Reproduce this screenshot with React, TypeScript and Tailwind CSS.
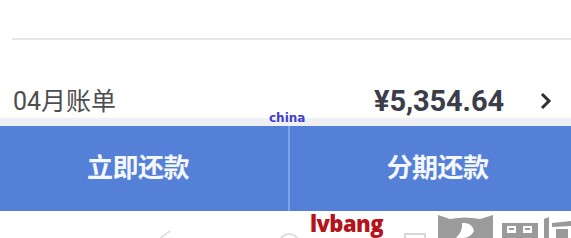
export default function App() {
  return (
    <div className="relative w-[571px] h-[238px] overflow-hidden bg-white" style={{ fontFamily: 'Roboto, "Noto Sans CJK SC", sans-serif' }}>
      <div className="h-[38px]" />
      <div className="ml-[12px] h-[2px] bg-[#e7e7e7]" />
      <div className="h-[78px] flex items-end pb-[1px] pl-[13px] pr-[18px]">
        <div className="text-[25px] leading-[30px] text-[#4d4d4d] font-normal">04月账单</div>
        <div className="ml-auto flex items-center">
          <div className="text-[29px] leading-[32px] font-bold text-[#3b3e4a] tracking-[-0.1px]">¥5,354.64</div>
          <svg width="14" height="20" viewBox="0 0 14 20" className="ml-[35px]">
            <path d="M3 3 L10 10 L3 17" fill="none" stroke="#2e3038" strokeWidth="3" />
          </svg>
        </div>
      </div>
      <div className="relative h-[8px] bg-[#eef0f4]">
        <span className="absolute left-[269px] top-[-7px] text-[12px] leading-[14px] font-bold text-[#3d3fd0]" style={{ fontFamily: '"DejaVu Sans", sans-serif' }}>china</span>
      </div>
      <div className="h-[85px] flex bg-[#5480d7]">
        <div className="w-[288px] flex items-center justify-center">
          <span className="text-[26px] font-bold text-[#f4f7fc] tracking-[-0.5px] mr-[12px]">立即还款</span>
        </div>
        <div className="w-[2px] bg-[#7fa3e8]" />
        <div className="flex-1 flex items-center justify-center">
          <span className="text-[26px] font-bold text-[#f4f7fc] tracking-[-0.5px] ml-[14px]">分期还款</span>
        </div>
      </div>
      <div className="relative h-[27px] bg-white">
        <svg className="absolute left-[152px] top-[19px]" width="22" height="8" viewBox="0 0 22 8">
          <path d="M18 1 L6 10" fill="none" stroke="#e0e0e0" strokeWidth="2" />
        </svg>
        <svg className="absolute left-[277px] top-[21px]" width="24" height="6" viewBox="0 0 24 6">
          <circle cx="12" cy="12" r="10" fill="none" stroke="#e0e0e0" strokeWidth="2" />
        </svg>
        <svg className="absolute left-[403px] top-[21px]" width="24" height="6" viewBox="0 0 24 6">
          <rect x="2" y="2" width="20" height="14" fill="none" stroke="#d8d8d8" strokeWidth="2" />
        </svg>
        <svg className="absolute left-[438px] top-[2px]" width="133" height="25" viewBox="0 0 133 25">
          <path d="M0 2 L12 6 Q27 3 42 6 L55 2 L55 25 L0 25 Z" fill="#9b9b9b" />
          <path d="M24 10 Q34 9 36 18 Q33 24 26 25 L18 25 Q25 18 24 10 Z" fill="#ffffff" />
          <rect x="64" y="10" width="36" height="15" fill="#9a9a9a" />
          <rect x="69" y="13" width="9" height="7" fill="#ffffff" />
          <rect x="85" y="13" width="9" height="7" fill="#ffffff" />
          <rect x="71" y="15" width="5" height="2" fill="#9a9a9a" />
          <rect x="87" y="15" width="5" height="2" fill="#9a9a9a" />
          <path d="M106 6 L111 4 L111 25 L106 25 Z M114 10 L133 8 L133 13 L114 14 Z M118 16 L130 16 L130 25 L118 25 Z" fill="#9a9a9a" />
        </svg>
        <span className="absolute left-[310px] top-[-1px] text-[22px] leading-[26px] font-extrabold text-[#b5121b] tracking-[-0.6px]" style={{ fontFamily: '"Open Sans", sans-serif', textShadow: '0 0 2px #fff' }}>lvbang</span>
      </div>
    </div>
  );
}
